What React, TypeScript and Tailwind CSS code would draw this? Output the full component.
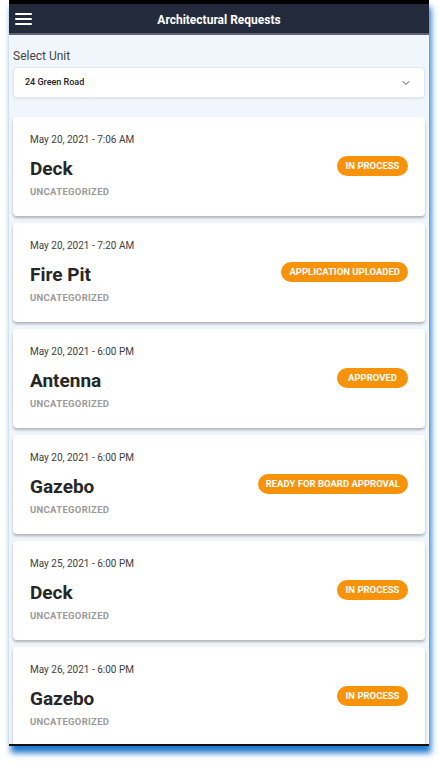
import { ChevronDown } from "lucide-react"

interface Request {
  date: string
  title: string
  status: string
}

const requests: Request[] = [
  { date: "May 20, 2021 - 7:06 AM", title: "Deck", status: "IN PROCESS" },
  { date: "May 20, 2021 - 7:20 AM", title: "Fire Pit", status: "APPLICATION UPLOADED" },
  { date: "May 20, 2021 - 6:00 PM", title: "Antenna", status: "APPROVED" },
  { date: "May 20, 2021 - 6:00 PM", title: "Gazebo", status: "READY FOR BOARD APPROVAL" },
  { date: "May 25, 2021 - 6:00 PM", title: "Deck", status: "IN PROCESS" },
  { date: "May 26, 2021 - 6:00 PM", title: "Gazebo", status: "IN PROCESS" },
]

function RequestCard({ request }: { request: Request }) {
  return (
    <div className="shrink-0 h-[99px] rounded-[4px] bg-white px-[17px] pt-[16px] shadow-[0_2px_3px_rgba(0,0,0,0.28)]">
      <p className="text-[10px] leading-[14px] text-[#3d3d3d]">{request.date}</p>
      <div className="mt-[10px] flex items-start justify-between">
        <h2 className="text-[19px] font-bold leading-[24px] text-[#262626]">{request.title}</h2>
        <span className="mt-[-1px] h-[20px] min-w-[71px] rounded-full bg-[#f7920b] px-[8px] text-center text-[9.5px] font-bold leading-[20px] text-white">
          {request.status}
        </span>
      </div>
      <p className="mt-[5px] text-[9.5px] font-bold leading-[12px] tracking-[0.3px] text-[#9a9a9a]">UNCATEGORIZED</p>
    </div>
  )
}

export default function App() {
  return (
    <div className="h-[764px] w-[438px] overflow-hidden bg-white font-['Roboto',sans-serif]">
      <div className="ml-[9px] flex h-[746px] w-[420px] flex-col overflow-hidden border-b-2 border-[#111] bg-[#f1f6fd] shadow-[2px_7px_6px_rgba(8,105,200,0.9)]">
        {/* top bar */}
        <div className="h-[4px] shrink-0 bg-black" />
        <header className="relative flex h-[31px] shrink-0 items-center justify-center border-b-2 border-[#5b6372] bg-[#232a3b]">
          <div className="absolute left-[6px] top-[9px] flex w-[17px] flex-col gap-[3px]">
            <span className="h-[2px] rounded-full bg-white" />
            <span className="h-[2px] rounded-full bg-white" />
            <span className="h-[2px] rounded-full bg-white" />
          </div>
          <h1 className="mt-[2px] text-[12px] font-bold text-white">Architectural Requests</h1>
        </header>

        <main className="flex flex-col px-[4px] pt-[13px]">
          <label className="text-[12px] leading-[16px] text-[#444]">Select Unit</label>
          <div className="mt-[3px] flex h-[31px] items-center justify-between rounded-[4px] border border-[#e3e6ea] bg-white pl-[11px] pr-[12px] shadow-[0_1px_2px_rgba(0,0,0,0.08)]">
            <span className="text-[9px] font-medium text-[#222]">24 Green Road</span>
            <ChevronDown size={12} strokeWidth={2} className="text-[#555]" />
          </div>

          <div className="mt-[19px] flex flex-col gap-[7px]">
            {requests.map((r, i) => (
              <RequestCard key={i} request={r} />
            ))}
          </div>
        </main>
      </div>
    </div>
  )
}
